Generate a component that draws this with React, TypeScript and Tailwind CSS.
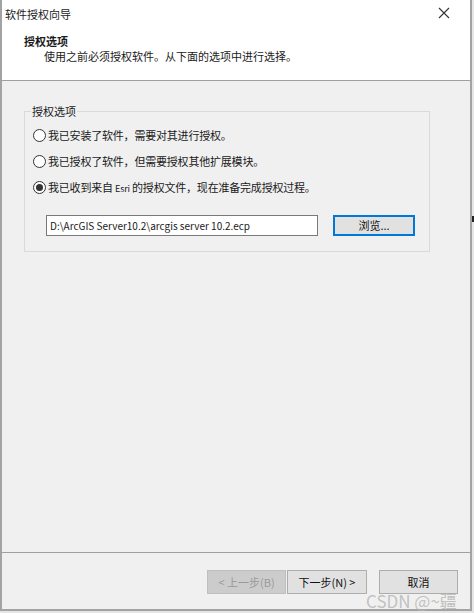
import React from "react";

const cjk = "font-['Noto_Sans_CJK_SC','Noto_Sans',sans-serif]";

function Radio({ checked }: { checked?: boolean }) {
  return (
    <span className="flex h-[13px] w-[13px] shrink-0 items-center justify-center rounded-full border border-[#333333] bg-white">
      {checked && <span className="h-[7px] w-[7px] rounded-full bg-[#333333]" />}
    </span>
  );
}

function WinButton({
  children,
  disabled,
  focused,
  className = "",
}: {
  children: React.ReactNode;
  disabled?: boolean;
  focused?: boolean;
  className?: string;
}) {
  const look = disabled
    ? "border-[#bfbfbf] bg-[#cccccc] text-[#9a9a9a]"
    : focused
    ? "border-[#0078d7] border-2 bg-[#e1e1e1] text-[#111]"
    : "border-[#adadad] bg-[#e1e1e1] text-[#111]";
  return (
    <div className={`flex items-center justify-center border text-[11px] leading-none ${look} ${className}`}>
      {children}
    </div>
  );
}

const options = [
  { label: "我已安装了软件，需要对其进行授权。" },
  { label: "我已授权了软件，但需要授权其他扩展模块。" },
  {
    label: (
      <>
        我已收到来自 <span className="text-[9px]">Esri</span> 的授权文件，现在准备完成授权过程。
      </>
    ),
    checked: true,
  },
];

export default function App() {
  return (
    <div className={`relative flex h-[613px] w-[474px] flex-col bg-[#e6e6e6] ${cjk}`}>
      <div className="flex h-[611px] w-[472px] flex-col border-x-2 border-b-2 border-[#a3a3a3] bg-[#f0f0f0] text-[#1a1a1a]">
        {/* title bar */}
        <div className="flex h-[28px] items-center justify-between bg-white pl-[3px] pr-[20px]">
          <span className="text-[11px] leading-none">软件授权向导</span>
          <svg width="12" height="12" viewBox="0 0 12 12" className="mb-[2px]">
            <path d="M1 1 L11 11 M11 1 L1 11" stroke="#333" strokeWidth="1.1" />
          </svg>
        </div>

        {/* header */}
        <div className="flex h-[53px] flex-col border-b border-[#a0a0a0] bg-white pl-[22px] pt-[6px]">
          <span className="text-[11px] font-bold leading-[14px]">授权选项</span>
          <span className="pl-[20px] pt-[1px] text-[11px] leading-[14px]">使用之前必须授权软件。从下面的选项中进行选择。</span>
        </div>

        {/* body */}
        <div className="flex flex-1 flex-col pl-[22px] pt-[30px]">
          <div className="relative flex h-[141px] w-[406px] flex-col border border-[#d9d9d9] pl-[8px] pt-[17px]">
            <span className="absolute left-[6px] top-[-8px] bg-[#f0f0f0] px-[1px] text-[11px] leading-[14px]">
              授权选项
            </span>
            <div className="flex flex-col gap-[13px]">
              {options.map((o, i) => (
                <div key={i} className="flex h-[13px] items-center gap-[2px] text-[11px] leading-none tracking-[-0.2px]">
                  <Radio checked={o.checked} />
                  <span>{o.label}</span>
                </div>
              ))}
            </div>
            <div className="mt-[21px] flex items-center pl-[13px]">
              <div className="flex h-[21px] w-[272px] items-center border border-[#7a7a7a] bg-white pl-[3px] text-[10px] leading-none">
                D:\ArcGIS Server10.2\arcgis server 10.2.ecp
              </div>
              <WinButton focused className="ml-[15px] h-[21px] w-[82px]">
                浏览...
              </WinButton>
            </div>
          </div>
        </div>

        {/* footer */}
        <div className="flex h-[57px] border-t border-[#a0a0a0] pl-[205px] pt-[17px]">
          <WinButton disabled className="h-[24px] w-[79px]">
            &lt; 上一步(B)
          </WinButton>
          <WinButton className="ml-[1px] h-[24px] w-[80px]">下一步(N) &gt;</WinButton>
          <WinButton className="ml-[12px] h-[24px] w-[79px]">取消</WinButton>
        </div>
      </div>

      {/* backdrop fragment at the right edge */}
      <div className="absolute left-[472px] top-[216px] h-[6px] w-[2px] bg-[#222]" />

      {/* watermark */}
      <span className="pointer-events-none absolute left-[366px] top-[592px] text-[17px] leading-none text-[#b4b4b4]/80">
        CSDN @~疆
      </span>
    </div>
  );
}
